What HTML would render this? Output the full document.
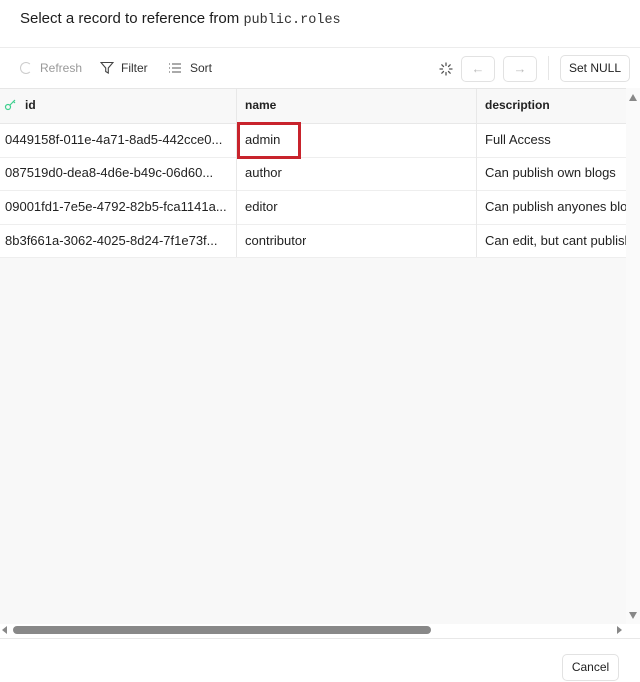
<!DOCTYPE html>
<html><head><style>
body{margin:0;width:640px;height:682px;background:#fff;font-family:"Liberation Sans",sans-serif;color:#222;position:relative;overflow:hidden}
.a{position:absolute}
.title{left:20px;top:10px;font-size:15px;color:#1c1c1c}
.title code{font-family:"Liberation Mono",monospace;font-size:13.5px;color:#333}
.tb{font-size:12px;color:#333}
.btn{border:1px solid #e2e2e2;border-radius:5px;background:#fff}
.cell{position:absolute;font-size:13px;color:#222;white-space:nowrap;overflow:hidden}
</style></head><body>
<div class="a title">Select a record to reference from <code>public.roles</code></div>
<div class="a" style="left:0;top:47px;width:640px;height:1px;background:#ececec"></div>
<!-- toolbar -->
<div class="a" style="left:20px;top:62px;width:10px;height:10px;border:1px solid #ccc;border-radius:50%;border-right-color:#fff"></div>
<div class="a tb" style="left:40px;top:61px;color:#999">Refresh</div>
<svg class="a" style="left:100px;top:61px" width="14" height="14" viewBox="0 0 14 14"><path d="M1 1.5h12l-4.7 5.5v5l-2.6-1.5V7z" fill="none" stroke="#444" stroke-width="1.1"/></svg>
<div class="a tb" style="left:121px;top:61px">Filter</div>
<svg class="a" style="left:168px;top:62px" width="14" height="12" viewBox="0 0 14 12"><path d="M1 2h1M1 6h1M1 10h1M4 2h9M4 6h9M4 10h9" stroke="#555" stroke-width="1.1"/></svg>
<div class="a tb" style="left:190px;top:61px">Sort</div>
<svg class="a" style="left:439px;top:62px" width="14" height="14" viewBox="0 0 14 14" stroke="#555" stroke-width="1.3" stroke-linecap="round"><path d="M7 1v2.5M7 10.5V13M1 7h2.5M10.5 7H13M2.8 2.8l1.7 1.7M9.5 9.5l1.7 1.7M2.8 11.2l1.7-1.7M9.5 4.5l1.7-1.7"/></svg>
<div class="a btn" style="left:461px;top:56px;width:32px;height:24px;color:#bbb;font-size:13px;text-align:center;line-height:24px">←</div>
<div class="a btn" style="left:503px;top:56px;width:32px;height:24px;color:#bbb;font-size:13px;text-align:center;line-height:24px">→</div>
<div class="a" style="left:548px;top:56px;width:1px;height:24px;background:#e6e6e6"></div>
<div class="a btn" style="left:560px;top:55px;width:68px;height:25px;font-size:12px;text-align:center;line-height:25px;color:#222">Set NULL</div>
<!-- grid -->
<div class="a" style="left:0;top:88px;width:626px;height:536px;background:#f8f8f8;border-top:1px solid #e6e6e6"></div>
<div class="a" style="left:0;top:123px;width:626px;height:134px;background:#fff"></div>
<div class="a" style="left:0;top:123px;width:626px;height:1px;background:#e8e8e8"></div>
<div class="a" style="left:0;top:157px;width:626px;height:1px;background:#eee"></div>
<div class="a" style="left:0;top:190px;width:626px;height:1px;background:#eee"></div>
<div class="a" style="left:0;top:224px;width:626px;height:1px;background:#eee"></div>
<div class="a" style="left:0;top:257px;width:626px;height:1px;background:#eee"></div>
<div class="a" style="left:236px;top:89px;width:1px;height:168px;background:#e8e8e8"></div>
<div class="a" style="left:476px;top:89px;width:1px;height:168px;background:#e8e8e8"></div>
<svg class="a" style="left:4px;top:99px" width="14" height="12" viewBox="0 0 14 12"><circle cx="4" cy="8" r="2.5" fill="none" stroke="#3ecf8e" stroke-width="1.2"/><path d="M6 6l5-5M9 2l2 2" stroke="#3ecf8e" stroke-width="1.2"/></svg>
<div class="cell" style="left:25px;top:98px;font-size:12px;font-weight:bold">id</div>
<div class="cell" style="left:245px;top:98px;font-size:12px;font-weight:bold">name</div>
<div class="cell" style="left:485px;top:98px;font-size:12px;font-weight:bold">description</div>
<div class="cell" style="left:5px;top:132px">0449158f-011e-4a71-8ad5-442cce0...</div>
<div class="cell" style="left:245px;top:132px">admin</div>
<div class="cell" style="left:485px;top:132px;width:141px">Full Access</div>
<div class="cell" style="left:5px;top:165px">087519d0-dea8-4d6e-b49c-06d60...</div>
<div class="cell" style="left:245px;top:165px">author</div>
<div class="cell" style="left:485px;top:165px;width:141px">Can publish own blogs</div>
<div class="cell" style="left:5px;top:199px">09001fd1-7e5e-4792-82b5-fca1141a...</div>
<div class="cell" style="left:245px;top:199px">editor</div>
<div class="cell" style="left:485px;top:199px;width:141px">Can publish anyones blogs</div>
<div class="cell" style="left:5px;top:233px">8b3f661a-3062-4025-8d24-7f1e73f...</div>
<div class="cell" style="left:245px;top:233px">contributor</div>
<div class="cell" style="left:485px;top:233px;width:141px">Can edit, but cant publish</div>
<div class="a" style="left:237px;top:122px;width:64px;height:37px;border:3px solid #c8232c;box-sizing:border-box"></div>
<!-- scrollbars -->
<div class="a" style="left:626px;top:88px;width:14px;height:536px;background:#fafafa"></div>
<div class="a" style="left:629px;top:94px;width:0;height:0;border-left:4px solid transparent;border-right:4px solid transparent;border-bottom:7px solid #888"></div>
<div class="a" style="left:629px;top:612px;width:0;height:0;border-left:4px solid transparent;border-right:4px solid transparent;border-top:7px solid #888"></div>
<div class="a" style="left:0;top:624px;width:640px;height:14px;background:#fff"></div>
<div class="a" style="left:2px;top:626px;width:0;height:0;border-top:4px solid transparent;border-bottom:4px solid transparent;border-right:5px solid #888"></div>
<div class="a" style="left:617px;top:626px;width:0;height:0;border-top:4px solid transparent;border-bottom:4px solid transparent;border-left:5px solid #888"></div>
<div class="a" style="left:13px;top:626px;width:418px;height:8px;border-radius:4px;background:#888"></div>
<div class="a" style="left:0;top:638px;width:640px;height:1px;background:#e8e8e8"></div>
<div class="a btn" style="left:562px;top:654px;width:55px;height:25px;font-size:12px;text-align:center;line-height:25px;color:#222">Cancel</div>
</body></html>
